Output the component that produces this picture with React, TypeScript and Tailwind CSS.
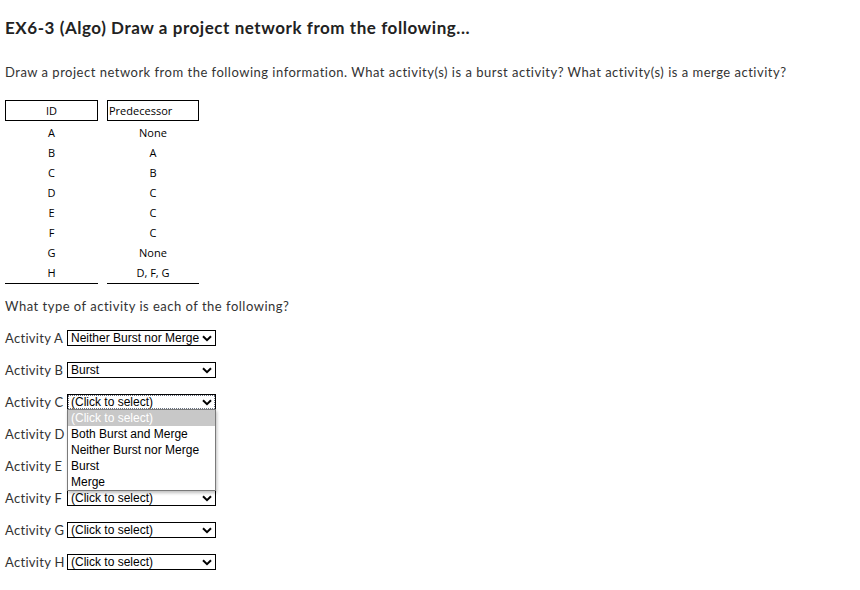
import React from "react";

const rows: [string, string][] = [
  ["A", "None"],
  ["B", "A"],
  ["C", "B"],
  ["D", "C"],
  ["E", "C"],
  ["F", "C"],
  ["G", "None"],
  ["H", "D, F, G"],
];

const acts: [string, string][] = [
  ["A", "Neither Burst nor Merge"],
  ["B", "Burst"],
  ["C", "(Click to select)"],
  ["D", "(Click to select)"],
  ["E", "(Click to select)"],
  ["F", "(Click to select)"],
  ["G", "(Click to select)"],
  ["H", "(Click to select)"],
];

function Chevron() {
  return (
    <svg width="10" height="7" viewBox="0 0 10 7" className="shrink-0">
      <path d="M1 1.2 L5 5.2 L9 1.2" fill="none" stroke="#000" strokeWidth="2" />
    </svg>
  );
}

function Sel({ value, open }: { value: string; open?: boolean }) {
  return (
    <div className="relative shrink-0 tracking-normal">
      <div
        className={
          "flex h-[16px] w-[149px] items-center justify-between whitespace-nowrap border border-black bg-white pl-[3px] pr-[3px] text-[12px] leading-none text-black" +
          (open ? " outline outline-1 outline-dotted outline-offset-[-2px] outline-gray-500" : "")
        }
        style={{ fontFamily: '"Liberation Sans", Arial, sans-serif' }}
      >
        <span>{value}</span>
        <Chevron />
      </div>
      {open && (
        <div
          className="absolute left-0 top-[15px] z-10 w-[149px] whitespace-nowrap border border-[#7a7a7a] bg-white text-[12px] leading-[16px] text-black shadow-[1px_2px_3px_rgba(0,0,0,0.25)]"
          style={{ fontFamily: '"Liberation Sans", Arial, sans-serif' }}
        >
          <div className="bg-[#c8c8c8] pl-[3px] text-white">(Click to select)</div>
          <div className="pl-[3px]">Both Burst and Merge</div>
          <div className="pl-[3px]">Neither Burst nor Merge</div>
          <div className="pl-[3px]">Burst</div>
          <div className="pl-[3px]">Merge</div>
        </div>
      )}
    </div>
  );
}

export default function App() {
  return (
    <div
      className="min-h-[590px] w-[860px] bg-white pl-[5px] text-[#333]"
      style={{ fontFamily: 'Lato, "Open Sans", sans-serif' }}
    >
      <h1 className="pt-[17px] text-[17px] font-bold leading-[22px] tracking-[0.55px] text-[#222]">
        EX6-3 (Algo) Draw a project network from the following...
      </h1>
      <p className="mt-[25px] text-[13px] leading-[17px] tracking-[0.5px]">
        Draw a project network from the following information. What activity(s) is a burst activity? What activity(s) is a merge activity?
      </p>
      <div
        className="mt-[19px] w-[194px] text-[11px] leading-[20px] text-black"
        style={{ fontFamily: '"Open Sans", sans-serif' }}
      >
        <div className="flex gap-[9px]">
          <div className="h-[21px] w-[93px] border border-black text-center">ID</div>
          <div className="h-[21px] w-[92px] border border-black pl-[1px]">Predecessor</div>
        </div>
        {rows.map(([a, b], i) => (
          <div key={a} className={"flex gap-[9px]" + (i === 0 ? " pt-[2px]" : "")}>
            <div
              className={
                "w-[93px] text-center" + (i === rows.length - 1 ? " border-b border-black" : "")
              }
            >
              {a}
            </div>
            <div
              className={
                "w-[92px] text-center" + (i === rows.length - 1 ? " border-b border-black" : "")
              }
            >
              {b}
            </div>
          </div>
        ))}
      </div>
      <p className="mt-[14px] text-[13px] leading-[17px] tracking-[0.5px]">
        What type of activity is each of the following?
      </p>
      <div className="mt-[15px] flex flex-col gap-[16px] text-[13px]">
        {acts.map(([k, v]) => (
          <div key={k} className="flex h-[16px] items-center">
            <span className="w-[62px] shrink-0 whitespace-nowrap leading-none tracking-[0.3px]">
              Activity {k}
            </span>
            <Sel value={v} open={k === "C"} />
          </div>
        ))}
      </div>
    </div>
  );
}
